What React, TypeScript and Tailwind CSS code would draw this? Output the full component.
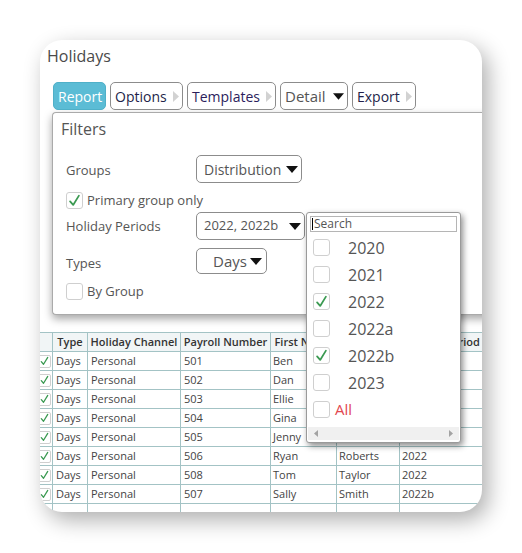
import React from 'react'

const rows = [
  ['501', 'Ben', 'Baker', '2022'],
  ['502', 'Dan', 'Davis', '2022'],
  ['503', 'Ellie', 'Evans', '2022'],
  ['504', 'Gina', 'Green', '2022b'],
  ['505', 'Jenny', 'Jones', '2022'],
  ['506', 'Ryan', 'Roberts', '2022'],
  ['508', 'Tom', 'Taylor', '2022'],
  ['507', 'Sally', 'Smith', '2022b'],
]

const periods = [
  { label: '2020', checked: false },
  { label: '2021', checked: false },
  { label: '2022', checked: true },
  { label: '2022a', checked: false },
  { label: '2022b', checked: true },
  { label: '2023', checked: false },
]

function Check({ size = 17 }: { size?: number }) {
  return (
    <svg width={size} height={size} viewBox="0 0 17 17">
      <path d="M3.5 9.5 L7 13.5 L13.5 3" fill="none" stroke="#3b9a52" strokeWidth="2" strokeLinecap="round" strokeLinejoin="round" />
    </svg>
  )
}

function Checkbox({ checked }: { checked?: boolean }) {
  return (
    <div className="flex h-[17px] w-[17px] shrink-0 items-center justify-center rounded-[3px] border border-[#cfcfcf] bg-white">
      {checked ? <Check /> : null}
    </div>
  )
}

function RightArrow() {
  return (
    <svg width="6" height="11" viewBox="0 0 6 11" className="shrink-0">
      <path d="M0 0 L6 5.5 L0 11 Z" fill="#d2d2d2" />
    </svg>
  )
}

function DownArrow({ w = 12, h = 7 }: { w?: number; h?: number }) {
  return (
    <svg width={w} height={h} viewBox="0 0 12 7" className="shrink-0">
      <path d="M0 0 L12 0 L6 7 Z" fill="#111" />
    </svg>
  )
}

function Tab({ label, width, active, arrow, textClass }: { label: string; width: string; active?: boolean; arrow?: 'right' | 'down'; textClass?: string }) {
  return (
    <div
      className={`flex h-[28px] items-center rounded-[5px] border ${width} ${
        active ? 'border-[#4fb0c8] bg-[#5bbcd5] text-white' : 'border-[#8c8c8c] bg-white'
      } pl-[4px] pr-[3px] text-[14px] justify-between`}
    >
      <span className={textClass}>{label}</span>
      {arrow === 'right' ? <RightArrow /> : null}
      {arrow === 'down' ? <DownArrow w={11} h={7} /> : null}
    </div>
  )
}

function Select({ value, width, height, textClass, padClass }: { value: string; width: string; height: string; textClass: string; padClass: string }) {
  return (
    <div className={`flex items-center justify-between rounded-[5px] border border-[#8c8c8c] bg-white ${width} ${height} ${padClass}`}>
      <span className={textClass}>{value}</span>
      <DownArrow />
    </div>
  )
}

export default function App() {
  return (
    <div className="h-[553px] w-[522px] overflow-hidden bg-white pl-[40px] pt-[40px] font-['Open_Sans',sans-serif]">
      <div className="relative h-[472px] w-[442px] overflow-hidden rounded-[22px] bg-white shadow-[6px_8px_22px_rgba(0,0,0,0.32)]">
        <div className="pl-[7px] pt-[6px] text-[16px] leading-[20px] text-[#4a4a4a]">Holidays</div>

        <div className="mt-[16px] flex gap-[4px] pl-[13px]">
          <Tab label="Report" width="w-[53px]" active />
          <Tab label="Options" width="w-[73px]" arrow="right" textClass="text-[#231f4a]" />
          <Tab label="Templates" width="w-[89px]" arrow="right" textClass="text-[#2b1d5c]" />
          <Tab label="Detail" width="w-[68px]" arrow="down" textClass="text-[15px] text-[#555]" />
          <Tab label="Export" width="w-[64px]" arrow="right" textClass="text-[#231f4a]" />
        </div>

        <div className="ml-[12px] mt-[2px] h-[203px] w-[470px] rounded-l-[4px] border-b border-l border-t border-[#aaa] bg-white shadow-[0_4px_8px_rgba(0,0,0,0.35)]">
          <div className="flex h-[32px] items-center pl-[8px] text-[16px] font-medium text-[#555]">Filters</div>
          <div className="pl-[13px] text-[13px] text-[#555]">
            <div className="mt-[10px] flex h-[28px] items-center">
              <span className="w-[130px] pt-[4px]">Groups</span>
              <Select value="Distribution" width="w-[106px]" height="h-[28px]" textClass="text-[14px]" padClass="pl-[7px] pr-[3px]" />
            </div>
            <div className="mt-[9px] flex h-[17px] items-center gap-[4px]">
              <Checkbox checked />
              <span>Primary group only</span>
            </div>
            <div className="mt-[3px] flex h-[28px] items-center">
              <span className="w-[130px] pt-[2px]">Holiday Periods</span>
              <Select value="2022, 2022b" width="w-[109px]" height="h-[28px]" textClass="text-[13px]" padClass="pl-[7px] pr-[3px]" />
            </div>
            <div className="mt-[8px] flex h-[26px] items-center">
              <span className="w-[130px] pt-[6px]">Types</span>
              <Select value="Days" width="w-[71px]" height="h-[26px]" textClass="text-[15px]" padClass="pl-[16px] pr-[4px]" />
            </div>
            <div className="mt-[9px] flex h-[17px] items-center gap-[4px]">
              <Checkbox />
              <span>By Group</span>
            </div>
          </div>
        </div>

        <table className="ml-[-5px] mt-[17px] w-[447px] table-fixed border-collapse text-[11px] text-[#444]">
          <colgroup>
            <col className="w-[17px]" />
            <col className="w-[35px]" />
            <col className="w-[93px]" />
            <col className="w-[90px]" />
            <col className="w-[66px]" />
            <col className="w-[63px]" />
            <col className="w-[83px]" />
          </colgroup>
          <thead>
            <tr className="h-[19px] bg-[#f1f5f6] font-semibold text-[#333]">
              <th className="border border-[#a3c3c5]"></th>
              <th className="border border-[#a3c3c5] font-semibold">Type</th>
              <th className="border border-[#a3c3c5] font-semibold">Holiday Channel</th>
              <th className="border border-[#a3c3c5] font-semibold">Payroll Number</th>
              <th className="whitespace-nowrap border border-[#a3c3c5] font-semibold">First Name</th>
              <th className="whitespace-nowrap border border-[#a3c3c5] font-semibold">Last Name</th>
              <th className="whitespace-nowrap border border-[#a3c3c5] font-semibold">Holiday Period</th>
            </tr>
          </thead>
          <tbody>
            {rows.map((r) => (
              <tr key={r[0]} className="h-[19px]">
                <td className="border border-[#a3c3c5] p-0">
                  <div className="ml-[2px] flex h-[13px] w-[13px] items-center justify-center rounded-[2px] border border-[#cfcfcf]">
                    <Check size={12} />
                  </div>
                </td>
                <td className="border border-[#a3c3c5] px-[3px]">Days</td>
                <td className="border border-[#a3c3c5] px-[3px]">Personal</td>
                <td className="border border-[#a3c3c5] px-[3px]">{r[0]}</td>
                <td className="border border-[#a3c3c5] px-[2px]">{r[1]}</td>
                <td className="border border-[#a3c3c5] px-[2px]">{r[2]}</td>
                <td className="border border-[#a3c3c5] px-[2px]">{r[3]}</td>
              </tr>
            ))}
            <tr className="h-[19px]">
              {[0, 1, 2, 3, 4, 5, 6].map((i) => (
                <td key={i} className="border border-[#a3c3c5]"></td>
              ))}
            </tr>
          </tbody>
        </table>

        <div className="absolute left-[266px] top-[172px] h-[231px] w-[155px] rounded-[3px] border border-[#9a9a9a] bg-white shadow-[2px_3px_6px_rgba(0,0,0,0.45)]">
          <div className="mx-[3px] mt-[3px] flex h-[16px] items-center border border-[#b5b5b5] text-[12px] leading-none text-[#555]">
            <span className="ml-[1px] mr-[1px] h-[12px] w-px bg-black"></span>
            Search
          </div>
          <div className="mt-[2px]">
            {periods.map((p) => (
              <div key={p.label} className="flex h-[27px] items-center pl-[6px]">
                <Checkbox checked={p.checked} />
                <span className="ml-[18px] text-[16px] text-[#555]">{p.label}</span>
              </div>
            ))}
            <div className="flex h-[27px] items-center pl-[6px]">
              <Checkbox />
              <span className="ml-[5px] text-[15px] text-[#e2474f]">All</span>
            </div>
          </div>
          <div className="mx-[1px] mt-[4px] flex h-[13px] items-center justify-between bg-[#f0f0f0] px-[6px]">
            <svg width="4" height="7" viewBox="0 0 4 7">
              <path d="M4 0 L0 3.5 L4 7 Z" fill="#a3a3a3" />
            </svg>
            <svg width="4" height="7" viewBox="0 0 4 7">
              <path d="M0 0 L4 3.5 L0 7 Z" fill="#a3a3a3" />
            </svg>
          </div>
        </div>
      </div>
    </div>
  )
}
